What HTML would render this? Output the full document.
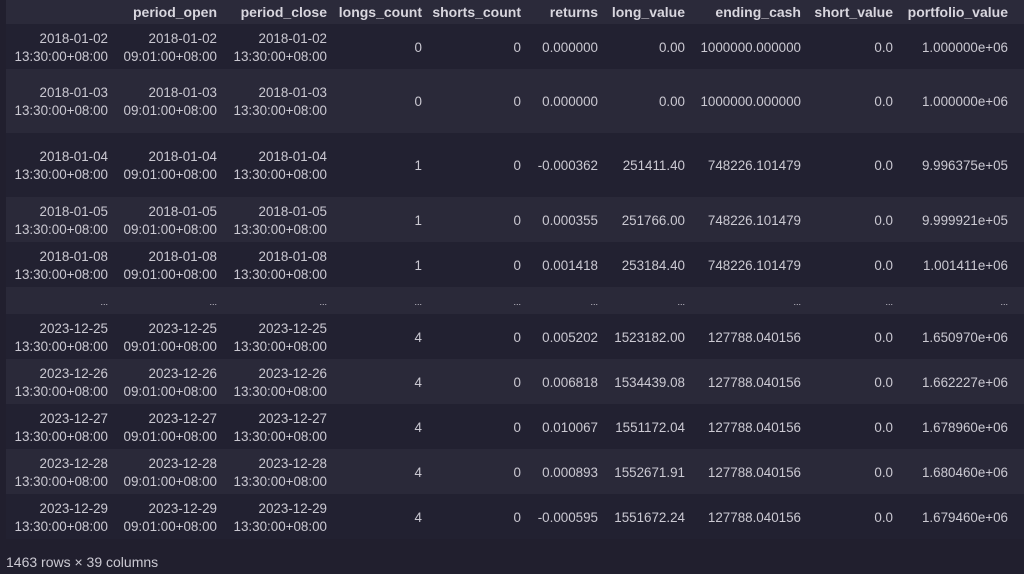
<!DOCTYPE html>
<html><head><meta charset="utf-8"><style>
html,body{margin:0;padding:0;width:1024px;height:574px;overflow:hidden;background:#211f2e;}
body{font-family:"Liberation Sans",sans-serif;font-size:13.4px;color:#cbc9d2;}
table{position:absolute;left:6px;top:0;border-collapse:collapse;table-layout:fixed;width:1040px;}
td,th{text-align:right;padding:0 5px 0 0;line-height:18px;white-space:nowrap;overflow:visible;box-sizing:border-box;}
td{padding-top:2px;}
th{font-weight:bold;height:24px;background:#2b2a3a;color:#d8d6de;font-size:14px;}
tr.d td{background:#222131;}
tr.l td{background:#2a2939;}
.h44 td{height:45px}.h64 td{height:64px}.h27 td{height:27px;font-size:9px;line-height:10px}
.foot{position:absolute;left:6px;top:554px;font-size:14px;color:#cbc9d2;}
</style></head><body>
<table>
<colgroup><col style="width:107px"><col style="width:109px"><col style="width:110px"><col style="width:95px"><col style="width:99px"><col style="width:77px"><col style="width:87px"><col style="width:116px"><col style="width:92px"><col style="width:115px"><col style="width:33px"></colgroup>
<tr><th></th><th>period_open</th><th>period_close</th><th>longs_count</th><th>shorts_count</th><th>returns</th><th>long_value</th><th>ending_cash</th><th>short_value</th><th>portfolio_value</th><th></th></tr>
<tr class="d h44"><td>2018-01-02<br>13:30:00+08:00</td><td>2018-01-02<br>09:01:00+08:00</td><td>2018-01-02<br>13:30:00+08:00</td><td>0</td><td>0</td><td>0.000000</td><td>0.00</td><td>1000000.000000</td><td>0.0</td><td>1.000000e+06</td><td></td></tr>
<tr class="l h64"><td>2018-01-03<br>13:30:00+08:00</td><td>2018-01-03<br>09:01:00+08:00</td><td>2018-01-03<br>13:30:00+08:00</td><td>0</td><td>0</td><td>0.000000</td><td>0.00</td><td>1000000.000000</td><td>0.0</td><td>1.000000e+06</td><td></td></tr>
<tr class="d h64"><td>2018-01-04<br>13:30:00+08:00</td><td>2018-01-04<br>09:01:00+08:00</td><td>2018-01-04<br>13:30:00+08:00</td><td>1</td><td>0</td><td>-0.000362</td><td>251411.40</td><td>748226.101479</td><td>0.0</td><td>9.996375e+05</td><td></td></tr>
<tr class="l h44"><td>2018-01-05<br>13:30:00+08:00</td><td>2018-01-05<br>09:01:00+08:00</td><td>2018-01-05<br>13:30:00+08:00</td><td>1</td><td>0</td><td>0.000355</td><td>251766.00</td><td>748226.101479</td><td>0.0</td><td>9.999921e+05</td><td></td></tr>
<tr class="d h44"><td>2018-01-08<br>13:30:00+08:00</td><td>2018-01-08<br>09:01:00+08:00</td><td>2018-01-08<br>13:30:00+08:00</td><td>1</td><td>0</td><td>0.001418</td><td>253184.40</td><td>748226.101479</td><td>0.0</td><td>1.001411e+06</td><td></td></tr>
<tr class="l h27"><td>...</td><td>...</td><td>...</td><td>...</td><td>...</td><td>...</td><td>...</td><td>...</td><td>...</td><td>...</td><td></td></tr>
<tr class="d h44"><td>2023-12-25<br>13:30:00+08:00</td><td>2023-12-25<br>09:01:00+08:00</td><td>2023-12-25<br>13:30:00+08:00</td><td>4</td><td>0</td><td>0.005202</td><td>1523182.00</td><td>127788.040156</td><td>0.0</td><td>1.650970e+06</td><td></td></tr>
<tr class="l h44"><td>2023-12-26<br>13:30:00+08:00</td><td>2023-12-26<br>09:01:00+08:00</td><td>2023-12-26<br>13:30:00+08:00</td><td>4</td><td>0</td><td>0.006818</td><td>1534439.08</td><td>127788.040156</td><td>0.0</td><td>1.662227e+06</td><td></td></tr>
<tr class="d h44"><td>2023-12-27<br>13:30:00+08:00</td><td>2023-12-27<br>09:01:00+08:00</td><td>2023-12-27<br>13:30:00+08:00</td><td>4</td><td>0</td><td>0.010067</td><td>1551172.04</td><td>127788.040156</td><td>0.0</td><td>1.678960e+06</td><td></td></tr>
<tr class="l h44"><td>2023-12-28<br>13:30:00+08:00</td><td>2023-12-28<br>09:01:00+08:00</td><td>2023-12-28<br>13:30:00+08:00</td><td>4</td><td>0</td><td>0.000893</td><td>1552671.91</td><td>127788.040156</td><td>0.0</td><td>1.680460e+06</td><td></td></tr>
<tr class="d h44"><td>2023-12-29<br>13:30:00+08:00</td><td>2023-12-29<br>09:01:00+08:00</td><td>2023-12-29<br>13:30:00+08:00</td><td>4</td><td>0</td><td>-0.000595</td><td>1551672.24</td><td>127788.040156</td><td>0.0</td><td>1.679460e+06</td><td></td></tr>
</table>
<div class="foot">1463 rows × 39 columns</div>
</body></html>
